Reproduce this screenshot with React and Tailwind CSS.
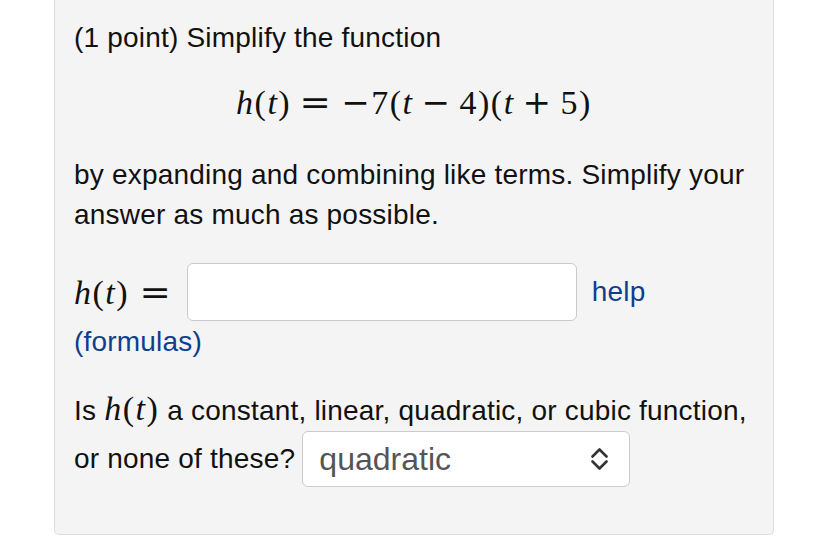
import React from "react";

const sans = { fontFamily: '"Liberation Sans", Arial, sans-serif' };

function I({ children }) {
  return <span className="italic" style={{ fontFamily: '"Liberation Serif", serif' }}>{children}</span>;
}
function R({ children, className = "" }) {
  return <span className={className} style={{ fontFamily: '"Liberation Serif", serif' }}>{children}</span>;
}
function Op({ children, className = "" }) {
  return <span className={"inline-block " + className} style={{ fontFamily: '"DejaVu Serif", serif', fontWeight: 300 }}>{children}</span>;
}

function Ht() {
  return (
    <span className="tracking-[1.5px] whitespace-nowrap">
      <I>h</I>
      <R>(</R>
      <I>t</I>
      <R>)</R>
    </span>
  );
}

export default function App() {
  return (
    <div className="min-h-[536px] w-[828px] bg-white" style={sans}>
      <div className="ml-[54px] w-[720px] border-x border-b border-[#dedede] rounded-b-[5px] bg-[#f4f4f4] pl-[19px] pr-[19px] pt-[18px] pb-[47px] text-[28px] leading-[40px] tracking-[0.2px] text-[#111]">
        <p>(1 point) Simplify the function</p>
        <div className="mt-[24px] flex justify-center text-[34px] leading-[40px]">
          <span className="whitespace-nowrap tracking-[1.5px]">
            <Ht />
            <Op className="mx-[10px] scale-x-110">=</Op>
            <Op>−</Op>
            <R>7(</R>
            <I>t</I>
            <Op className="mx-[8px]">−</Op>
            <R>4)(</R>
            <I>t</I>
            <Op className="mx-[8px]">+</Op>
            <R>5)</R>
          </span>
        </div>
        <p className="mt-[32px]">
          by expanding and combining like terms. Simplify your answer as much as possible.
        </p>
        <div className="mt-[28px] flex items-center h-[58px]">
          <span className="text-[34px] whitespace-nowrap">
            <Ht />
            <Op className="ml-[12px] scale-x-110">=</Op>
          </span>
          <div className="ml-[17px] w-[390px] h-[58px] rounded-[6px] border border-[#c9c9c9] bg-white" />
          <a className="ml-[15px] text-[#0e3f8f]">help</a>
        </div>
        <p className="mt-[1px] text-[#0e3f8f]">(formulas)</p>
        <p className="mt-[29px] whitespace-nowrap">
          Is <span className="text-[34px] leading-none"><Ht /></span> a constant, linear, quadratic, or cubic function,
        </p>
        <div className="flex items-center h-[56px]">
          <span>or none of these?</span>
          <div className="ml-[7px] w-[328px] h-[56px] rounded-[6px] border border-[#cbcbcb] bg-white flex items-center justify-between pl-[16px] pr-[21px]">
            <span className="text-[32px] tracking-normal text-[#555]">quadratic</span>
            <svg width="17" height="24" viewBox="0 0 17 24" fill="none" stroke="#333" strokeWidth="2.6" strokeLinecap="round" strokeLinejoin="round">
              <path d="M1.5 9.5 L8.5 2.5 L15.5 9.5" />
              <path d="M1.5 14.5 L8.5 21.5 L15.5 14.5" />
            </svg>
          </div>
        </div>
      </div>
    </div>
  );
}
